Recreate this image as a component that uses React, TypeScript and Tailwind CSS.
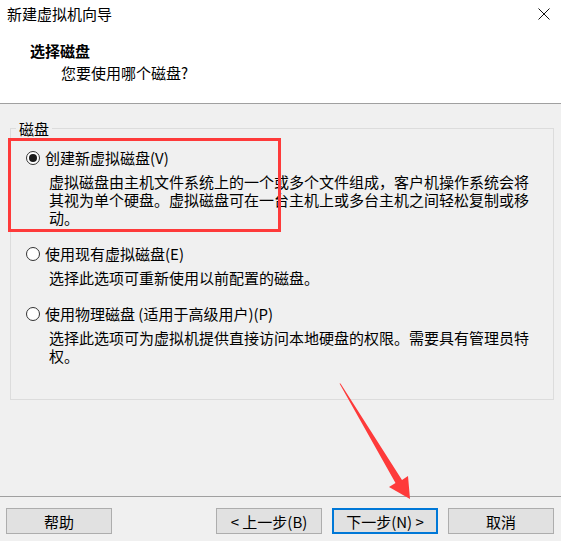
import React from "react";

const font = { fontFamily: '"Noto Sans CJK SC", "Noto Sans", sans-serif' };

type Option = {
  label: string;
  desc: string;
  checked?: boolean;
};

const options: Option[] = [
  {
    label: "创建新虚拟磁盘(V)",
    desc: "虚拟磁盘由主机文件系统上的一个或多个文件组成，客户机操作系统会将其视为单个硬盘。虚拟磁盘可在一台主机上或多台主机之间轻松复制或移动。",
    checked: true,
  },
  {
    label: "使用现有虚拟磁盘(E)",
    desc: "选择此选项可重新使用以前配置的磁盘。",
  },
  {
    label: "使用物理磁盘 (适用于高级用户)(P)",
    desc: "选择此选项可为虚拟机提供直接访问本地硬盘的权限。需要具有管理员特权。",
  },
];

const Radio = ({ checked }: { checked?: boolean }) => (
  <span className="w-[14px] h-[14px] rounded-full border border-[#333333] bg-white flex items-center justify-center shrink-0">
    {checked && <span className="w-[8px] h-[8px] rounded-full bg-[#1a1a1a]" />}
  </span>
);

const Button = ({ children, primary }: { children: React.ReactNode; primary?: boolean }) => (
  <button
    className={
      primary
        ? "w-[106px] h-[26px] bg-[#e1e1e1] border-2 border-[#0078d7] text-[15px] leading-[17px] text-black"
        : "w-[106px] h-[26px] bg-[#e1e1e1] border border-[#adadad] text-[15px] leading-[17px] text-black"
    }
  >
    {children}
  </button>
);

export default function App() {
  return (
    <div className="relative w-[561px] h-[541px] bg-[#f0f0f0] flex flex-col text-black overflow-hidden" style={font}>
      {/* title bar + header */}
      <div className="bg-white border-b border-[#a0a0a0]">
        <div className="h-[27px] flex items-center justify-between pl-[7px] pr-[11px]">
          <span className="text-[15px] leading-[17px]">新建虚拟机向导</span>
          <svg width="12" height="12" viewBox="0 0 12 12">
            <path d="M0.5 0.5 L11.5 11.5 M11.5 0.5 L0.5 11.5" stroke="#111" strokeWidth="1" />
          </svg>
        </div>
        <div className="h-[76px] pt-[15px] pl-[30px]">
          <div className="text-[15px] leading-[17px] font-bold">选择磁盘</div>
          <div className="mt-[5px] ml-[31px] text-[15px] leading-[17px]">您要使用哪个磁盘?</div>
        </div>
      </div>

      {/* disk group */}
      <fieldset className="mt-[16px] ml-[10px] w-[544px] h-[280px] border border-[#dcdcdc] p-0">
        <legend className="ml-[5px] px-[3px] text-[15px] leading-[17px]">磁盘</legend>
        <div className="pt-[12px] pl-[15px] flex flex-col gap-[18px]">
          {options.map((o) => (
            <div key={o.label}>
              <div className="h-[18px] flex items-center gap-[5px]">
                <Radio checked={o.checked} />
                <span className="text-[15px] leading-[18px]">{o.label}</span>
              </div>
              <p className="mt-[6px] ml-[23px] w-[484px] text-[15px] leading-[18px]">{o.desc}</p>
            </div>
          ))}
        </div>
      </fieldset>

      {/* footer */}
      <div className="mt-auto border-t border-[#a0a0a0] pt-[11px] pb-[7px] pl-[6px] pr-[7px] flex">
        <Button>帮助</Button>
        <div className="ml-auto flex gap-[10px]">
          <Button>&lt; 上一步(B)</Button>
          <Button primary>下一步(N) &gt;</Button>
          <Button>取消</Button>
        </div>
      </div>

      {/* annotation: highlight box */}
      <div className="absolute left-[8px] top-[138px] w-[273px] h-[94px] border-[3px] border-[#fe3a3a] pointer-events-none" />

      {/* annotation: arrow */}
      <svg className="absolute left-0 top-0 pointer-events-none" width="561" height="541" viewBox="0 0 561 541">
        <polygon
          points="339.5,383.5 340.5,383.5 402,480 408,476 410,499 389,487 395.5,483"
          fill="#fe3a3a"
        />
      </svg>
    </div>
  );
}
